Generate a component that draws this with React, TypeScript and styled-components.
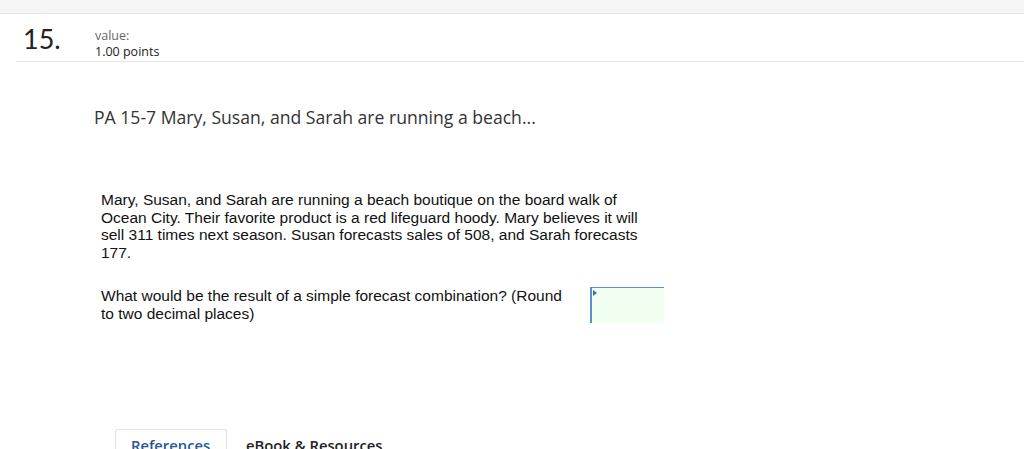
import React from 'react'
import styled, { createGlobalStyle } from 'styled-components'

const Global = createGlobalStyle`
  html, body { margin: 0; padding: 0; background: #fff; }
  body { font-family: "Liberation Sans", Arial, sans-serif; overflow: hidden; }
`

const Page = styled.div`
  width: 1024px;
  height: 449px;
  overflow: hidden;
`

const TopStrip = styled.div`
  height: 13px;
  background: #f6f6f6;
  border-bottom: 1px solid #e6e6e6;
`

const Header = styled.div`
  display: flex;
  align-items: flex-start;
  margin-left: 16px;
  padding-top: 11px;
  height: 36px;
  border-bottom: 1px solid #e4e4e4;
`

const Number = styled.div`
  font-family: Lato, "Open Sans", sans-serif;
  font-size: 27px;
  line-height: 28px;
  color: #222;
  width: 79px;
  padding-left: 7px;
  box-sizing: border-box;
`

const Points = styled.div`
  font-family: "Open Sans", Lato, sans-serif;
  font-size: 12.5px;
  line-height: 16px;
  padding-top: 3px;
`

const PointsLabel = styled.div`
  color: #666;
`

const PointsValue = styled.div`
  color: #222;
`

const Body = styled.div`
  padding: 44px 0 0 94px;
`

const Title = styled.h2`
  margin: 0;
  font-family: "Open Sans", Lato, sans-serif;
  font-weight: 400;
  font-size: 17.6px;
  line-height: 22px;
  color: #333;
`

const Question = styled.div`
  padding: 63px 0 0 7px;
  color: #111;
  font-size: 15.5px;
  line-height: 17.5px;
`

const Paragraph = styled.p`
  margin: 0;
  width: 556px;
`

const AnswerRow = styled.div`
  display: flex;
  align-items: flex-start;
  margin-top: 26px;
  gap: 18px;
`

const Prompt = styled.p`
  margin: 0;
  width: 471px;
`

const AnswerBox = styled.div`
  position: relative;
  width: 72px;
  height: 35px;
  background: #f1fff1;
  border-top: 1px solid #5b8fd4;
  border-left: 2px solid #5b8fd4;
`

const Caret = styled.span`
  position: absolute;
  left: 1px;
  top: 2px;
  width: 0;
  height: 0;
  border-top: 3px solid transparent;
  border-bottom: 3px solid transparent;
  border-left: 4px solid #3a70c0;
`

const Tabs = styled.div`
  display: flex;
  align-items: flex-end;
  gap: 3px;
  margin: 106px 0 0 21px;
`

const Tab = styled.div<{ $active?: boolean }>`
  font-family: "Open Sans", Lato, sans-serif;
  font-weight: 600;
  font-size: 14.8px;
  line-height: 18px;
  padding: 6px 15px 12px;
  min-width: ${p => (p.$active ? '80px' : '0')};
  color: ${p => (p.$active ? '#2c5597' : '#222')};
  border: 1px solid ${p => (p.$active ? '#e2e2e2' : 'transparent')};
  border-bottom: none;
  border-radius: 3px 3px 0 0;
  white-space: nowrap;
`

export default function App() {
  return (
    <Page>
      <Global />
      <TopStrip />
      <Header>
        <Number>15.</Number>
        <Points>
          <PointsLabel>value:</PointsLabel>
          <PointsValue>1.00 points</PointsValue>
        </Points>
      </Header>
      <Body>
        <Title>PA 15-7 Mary, Susan, and Sarah are running a beach...</Title>
        <Question>
          <Paragraph>
            Mary, Susan, and Sarah are running a beach boutique on the board walk of Ocean City. Their
            favorite product is a red lifeguard hoody. Mary believes it will sell 311 times next season.
            Susan forecasts sales of 508, and Sarah forecasts 177.
          </Paragraph>
          <AnswerRow>
            <Prompt>What would be the result of a simple forecast combination? (Round to two decimal places)</Prompt>
            <AnswerBox>
              <Caret />
            </AnswerBox>
          </AnswerRow>
        </Question>
        <Tabs>
          <Tab $active>References</Tab>
          <Tab>eBook &amp; Resources</Tab>
        </Tabs>
      </Body>
    </Page>
  )
}
